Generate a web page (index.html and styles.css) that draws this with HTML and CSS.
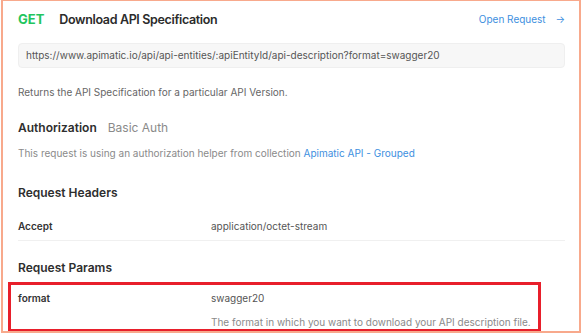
FILE: index.html
```html
<!DOCTYPE html>
<html lang="en">
<head>
  <meta charset="UTF-8">
  <title>Download API Specification</title>
  <link rel="stylesheet" href="styles.css">
</head>
<body>
  <div class="quadro">
    <div class="topo">
      <div class="titulo">
        <span class="metodo">GET</span>
        <span class="nome">Download API Specification</span>
      </div>
      <a class="abrir" href="#">Open Request <span class="seta">&#8594;</span></a>
    </div>

    <div class="url">https://www.apimatic.io/api/api-entities/:apiEntityId/api-description?format=swagger20</div>

    <p class="descricao">Returns the API Specification for a particular API Version.</p>

    <div class="secao auth">
      <h3>Authorization <span class="tipo">Basic Auth</span></h3>
      <p class="nota">This request is using an authorization helper from collection <a href="#">Apimatic API - Grouped</a></p>
    </div>

    <div class="secao">
      <h3>Request Headers</h3>
      <div class="linha com-borda">
        <div class="chave">Accept</div>
        <div class="valor">application/octet-stream</div>
      </div>
    </div>

    <div class="secao params">
      <h3>Request Params</h3>
      <div class="linha destaque">
        <div class="chave">format</div>
        <div class="valor">
          swagger20
          <div class="valor-nota">The format in which you want to download your API description file.</div>
        </div>
      </div>
    </div>
  </div>
</body>
</html>
```

FILE: styles.css
```css
body {
  margin: 0;
  font-family: Inter, "Noto Sans", sans-serif;
  background: #ffffff;
  color: #333;
}

.quadro {
  margin-left: 1px;
  width: 580px;
  height: 333px;
  border: 2px solid #f8a98c;
  border-top-width: 1px;
  padding: 0 14px 0 15px;
  box-sizing: border-box;
  position: relative;
  overflow: hidden;
}

.topo {
  display: flex;
  justify-content: space-between;
  align-items: center;
  height: 36px;
}

.titulo {
  display: flex;
  align-items: center;
  gap: 15px;
}

.metodo {
  color: #22c55e;
  font-weight: 700;
  font-size: 13px;
}

.nome {
  font-size: 12.5px;
  font-weight: 600;
  letter-spacing: -0.35px;
  color: #2b2b2b;
}

.abrir {
  color: #3d8fe0;
  font-size: 10px;
  text-decoration: none;
  margin-right: 0;
}

.seta {
  margin-left: 7px;
}

.url {
  margin-top: 6px;
  background: #f7f7f7;
  border: 1px solid #efefef;
  border-radius: 4px;
  height: 25px;
  line-height: 23px;
  padding: 0 7px;
  box-sizing: border-box;
  font-size: 10px;
  color: #555;
}

.descricao {
  margin: 17px 0 0;
  font-size: 10px;
  line-height: 14px;
  color: #666;
}

.secao h3 {
  margin: 0;
  font-size: 12px;
  line-height: 16px;
  font-weight: 600;
  color: #2e2e2e;
}

.auth {
  margin-top: 21px;
}

.tipo {
  font-weight: 400;
  color: #8a8a8a;
  margin-left: 8px;
}

.nota {
  margin: 10px 0 0;
  font-size: 10px;
  line-height: 14px;
  color: #8a8a8a;
}

.nota a {
  color: #3d8fe0;
  text-decoration: none;
}

.secao + .secao {
  margin-top: 25px;
}

.secao.params {
  margin-top: 19px;
}

.linha {
  display: flex;
  font-size: 10px;
  line-height: 14px;
  padding: 18px 0 7px;
}

.com-borda {
  border-bottom: 1px solid #f0f0f0;
}

.params .linha {
  padding-top: 15px;
}

.chave {
  width: 193px;
  font-weight: 600;
  color: #333;
}

.valor {
  color: #555;
}

.valor-nota {
  margin-top: 10px;
  color: #8a8a8a;
}

.destaque {
  position: relative;
}

.destaque::before {
  content: '';
  position: absolute;
  left: -10px;
  top: 6px;
  width: 533px;
  height: 50px;
  box-sizing: border-box;
  border: 3px solid #e81f2b;
}
```
